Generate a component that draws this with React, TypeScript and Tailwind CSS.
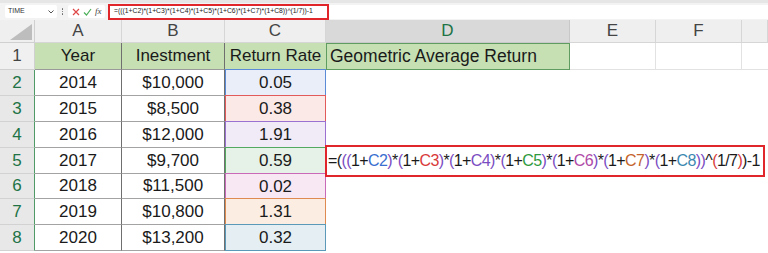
import React from "react";

const F = { fontFamily: '"Liberation Sans", Arial, sans-serif' };

type Seg = [string, string];
const K = "text-[#1a1a1a]";
const P = "text-[#7a4cc2]";
const segs: Seg[] = [
  ["=", K], ["(", K], ["((", P],
  ["1+", K], ["C2", "text-[#3a6fd0]"], [")", P], ["*", K],
  ["(", P], ["1+", K], ["C3", "text-[#d93a3a]"], [")", P], ["*", K],
  ["(", P], ["1+", K], ["C4", "text-[#7a4cc2]"], [")", P], ["*", K],
  ["(", P], ["1+", K], ["C5", "text-[#2f9a3e]"], [")", P], ["*", K],
  ["(", P], ["1+", K], ["C6", "text-[#b04aa8]"], [")", P], ["*", K],
  ["(", P], ["1+", K], ["C7", "text-[#c4632b]"], [")", P], ["*", K],
  ["(", P], ["1+", K], ["C8", "text-[#3b88b0]"], ["))", P],
  ["^", K], ["(", "text-[#d93a3a]"], ["1/7", K], [")", "text-[#d93a3a]"], [")", K], ["-1", K],
];

const rows = [
  { n: "2", y: "2014", inv: "$10,000", r: "0.05", cls: "bg-[#e9eef8] border-[#5b8bd6]" },
  { n: "3", y: "2015", inv: "$8,500", r: "0.38", cls: "bg-[#fbe9e8] border-[#e25a5a]" },
  { n: "4", y: "2016", inv: "$12,000", r: "1.91", cls: "bg-[#f0ebf7] border-[#9a70d0]" },
  { n: "5", y: "2017", inv: "$9,700", r: "0.59", cls: "bg-[#e6f1e7] border-[#55a860]" },
  { n: "6", y: "2018", inv: "$11,500", r: "0.02", cls: "bg-[#f7e8f3] border-[#c86ab8]" },
  { n: "7", y: "2019", inv: "$10,800", r: "1.31", cls: "bg-[#fcede2] border-[#df8a50]" },
  { n: "8", y: "2020", inv: "$13,200", r: "0.32", cls: "bg-[#e5eff3] border-[#5a9ab8]" },
];

function Formula() {
  return (
    <span className="text-[16px] tracking-[-0.6px] whitespace-nowrap">
      {segs.map((s, i) => (
        <span key={i} className={s[1]}>
          {s[0]}
        </span>
      ))}
    </span>
  );
}

export default function App() {
  return (
    <div className="w-[768px] h-[253px] overflow-hidden bg-white" style={F}>
      {/* formula bar */}
      <div className="h-[20px] bg-[#f3f3f3] border-t-[3px] border-[#e6e6e6] flex items-center">
        <div className="ml-[5px] w-[52px] h-[13px] bg-white rounded-[2px] flex items-center justify-between px-[3px]">
          <span className="text-[7px] text-[#333]">TIME</span>
          <svg width="6" height="4" viewBox="0 0 6 4">
            <path d="M0.5 0.5 L3 3 L5.5 0.5" fill="none" stroke="#555" strokeWidth="1" />
          </svg>
        </div>
        <div className="w-[11px] flex flex-col items-center gap-[1px]">
          <span className="w-[1.5px] h-[1.5px] bg-[#666] rounded-full" />
          <span className="w-[1.5px] h-[1.5px] bg-[#666] rounded-full" />
          <span className="w-[1.5px] h-[1.5px] bg-[#666] rounded-full" />
        </div>
        <div className="w-[37px] h-[13px] bg-white rounded-[2px] flex items-center justify-around px-[2px]">
          <svg width="8" height="8" viewBox="0 0 8 8">
            <path d="M1 1 L7 7 M7 1 L1 7" stroke="#e04848" strokeWidth="1.2" />
          </svg>
          <svg width="9" height="8" viewBox="0 0 9 8">
            <path d="M1 4.5 L3.5 7 L8 1" fill="none" stroke="#4caf5a" strokeWidth="1.2" />
          </svg>
          <span className="text-[9px] italic text-[#444]" style={{ fontFamily: '"Liberation Serif", serif' }}>
            fx
          </span>
        </div>
        <div className="ml-[3px] flex-1 h-[14px] bg-white flex items-center">
          <div className="w-[221px] h-[16px] border-[2px] border-[#e0262b] flex items-center pl-[4px] bg-white">
            <span className="text-[6.8px] text-[#222] whitespace-nowrap">
              =(((1+C2)*(1+C3)*(1+C4)*(1+C5)*(1+C6)*(1+C7)*(1+C8))^(1/7))-1
            </span>
          </div>
        </div>
      </div>

      {/* sheet */}
      <div className="grid grid-cols-[35px_87px_103px_101px_244px_86px_86px_1fr] grid-rows-[23px_27px_26px_26px_26px_26px_25px_26px_26px] text-[#1a1a1a]">
        {/* header row */}
        <div className="bg-[#efefef] border-r border-b border-[#d0d0d0] flex items-end justify-end pr-[2px] pb-[2px]">
          <svg width="22" height="16" viewBox="0 0 22 16">
            <path d="M22 0 L22 16 L0 16 Z" fill="#bdbdbd" />
          </svg>
        </div>
        {["A", "B", "C"].map((c) => (
          <div key={c} className="bg-[#efefef] border-r border-b border-[#d6d6d6] flex items-center justify-center text-[17px] text-[#444]">
            {c}
          </div>
        ))}
        <div className="bg-[#d9d9d9] border-r border-b border-[#c8c8c8] flex items-center justify-center text-[17px] text-[#217346]">
          D
        </div>
        {["E", "F", ""].map((c, i) => (
          <div key={i} className="bg-[#efefef] border-r border-b border-[#d6d6d6] flex items-center justify-center text-[17px] text-[#444]">
            {c}
          </div>
        ))}

        {/* row 1 */}
        <div className="bg-[#f0f0f0] border-r border-b border-[#d0d0d0] flex items-center justify-center text-[17px] text-[#444]">
          1
        </div>
        <div className="bg-[#c6e0b4] border-r border-b border-r-[#6f6f6f] border-b-[#9a9a9a] flex items-center justify-center text-[17px]">
          Year
        </div>
        <div className="bg-[#c6e0b4] border-r border-b border-r-[#6f6f6f] border-b-[#9a9a9a] flex items-center justify-center text-[17px]">
          Inestment
        </div>
        <div className="bg-[#c6e0b4] border-b border-b-[#5b8bd6] flex items-center justify-center text-[17px]">
          Return Rate
        </div>
        <div className="bg-[#c6e0b4] border border-[#5f9c5f] flex items-center pl-[3px] text-[17.5px] whitespace-nowrap">
          Geometric Average Return
        </div>
        <div className="border-r border-b border-[#e2e2e2]" />
        <div className="border-r border-b border-[#e2e2e2]" />
        <div className="border-b border-[#e2e2e2]" />

        {rows.map((r, i) => (
          <React.Fragment key={r.n}>
            <div className="bg-[#e8e8e8] border-r border-b border-b-[#d2d2d2] border-r-[#4f9a66] flex items-center justify-center text-[17px] text-[#217346]">
              {r.n}
            </div>
            <div className="border-r border-b border-r-[#6f6f6f] border-b-[#a3a3a3] flex items-center justify-center text-[17px]">
              {r.y}
            </div>
            <div className="border-r border-b border-r-[#6f6f6f] border-b-[#a3a3a3] flex items-center justify-center text-[17px]">
              {r.inv}
            </div>
            <div className={`${r.cls} border-t border-l border-r ${i === rows.length - 1 ? "border-b" : ""} -mt-px flex items-center justify-center text-[17px]`}>
              {r.r}
            </div>
            <div className="relative">
              {r.n === "5" && (
                <div className="absolute left-[-1px] top-[-3px] w-[440px] h-[32px] border-[2px] border-[#e0262b] bg-white flex items-center pl-[1px] z-10">
                  <Formula />
                </div>
              )}
            </div>
            <div />
            <div />
            <div />
          </React.Fragment>
        ))}
      </div>
    </div>
  );
}
